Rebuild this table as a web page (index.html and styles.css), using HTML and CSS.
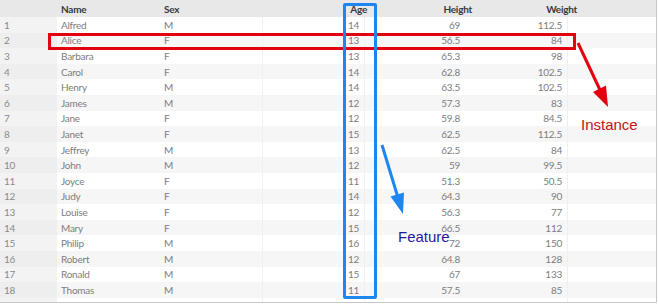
FILE: index.html
```html
<!DOCTYPE html>
<html>
<head>
<meta charset="utf-8">
<link rel="stylesheet" href="styles.css">
</head>
<body>
<div class="viewer">
  <div class="grid head">
    <div class="hd rn"></div>
    <div class="hd txt">Name</div>
    <div class="hd txt">Sex</div>
    <div class="hd num"><span class="h-age">Age</span></div>
    <div class="hd num"><span class="h-height">Height</span></div>
    <div class="hd num"><span class="h-weight">Weight</span></div>
    <div class="hd fill"></div>
  </div>
  <div class="grid body" id="body"></div>

  <div class="box-red"></div>
  <div class="box-blue"></div>
  <svg class="arrows" width="658" height="306" viewBox="0 0 658 306">
    <line x1="578" y1="43" x2="600" y2="90" stroke="#e3000f" stroke-width="3"/>
    <polygon points="608,107 606,85.5 593,92" fill="#e3000f"/>
    <line x1="382" y1="145" x2="397.5" y2="196" stroke="#1e86f0" stroke-width="3"/>
    <polygon points="403,214 404,192.5 390.5,196.5" fill="#1e86f0"/>
  </svg>
  <div class="label instance">Instance</div>
  <div class="label feature">Feature</div>
</div>
<script>
var data = [
["Alfred","M","14","69","112.5"],
["Alice","F","13","56.5","84"],
["Barbara","F","13","65.3","98"],
["Carol","F","14","62.8","102.5"],
["Henry","M","14","63.5","102.5"],
["James","M","12","57.3","83"],
["Jane","F","12","59.8","84.5"],
["Janet","F","15","62.5","112.5"],
["Jeffrey","M","13","62.5","84"],
["John","M","12","59","99.5"],
["Joyce","F","11","51.3","50.5"],
["Judy","F","14","64.3","90"],
["Louise","F","12","56.3","77"],
["Mary","F","15","66.5","112"],
["Philip","M","16","72","150"],
["Robert","M","12","64.8","128"],
["Ronald","M","15","67","133"],
["Thomas","M","11","57.5","85"],
["William","M","15","66.5","112"]
];
var body = document.getElementById("body");
var html = "";
data.forEach(function(r, i){
  var cls = i % 2 ? "alt" : "";
  html += '<div class="c rn ' + cls + '">' + (i+1) + '</div>' +
          '<div class="c txt ' + cls + '">' + r[0] + '</div>' +
          '<div class="c txt ' + cls + '">' + r[1] + '</div>' +
          '<div class="c num ' + cls + '">' + r[2] + '</div>' +
          '<div class="c num ' + cls + '">' + r[3] + '</div>' +
          '<div class="c num ' + cls + '">' + r[4] + '</div>' +
          '<div class="c fill ' + cls + '"></div>';
});
body.innerHTML = html;
</script>
</body>
</html>
```

FILE: styles.css
```css
html, body {
  margin: 0;
  padding: 0;
  background: #ffffff;
}
.viewer {
  position: relative;
  width: 657px;
  height: 303px;
  overflow: hidden;
  border-right: 1px solid #c8c8c8;
  border-bottom: 1px solid #c8c8c8;
  box-sizing: border-box;
  font-family: Lato, "Open Sans", sans-serif;
  font-size: 10px;
  letter-spacing: -0.25px;
  color: #7d7d7d;
}
.grid {
  display: grid;
  grid-template-columns: 57px 103px 103px 102px 101px 102px 1fr;
}
.grid.head {
  background: #e8e8e8;
}
.grid.body {
  grid-auto-rows: 15.6px;
}
.hd {
  height: 17px;
  color: #383838;
  font-weight: bold;
  display: flex;
  align-items: center;
  white-space: nowrap;
}
.hd.txt { padding-left: 4px; }
.hd.num { justify-content: flex-end; }
.h-age { margin-right: -2px; }
.h-height { margin-right: -6px; }
.h-weight { margin-right: -9px; }
.c {
  display: flex;
  align-items: center;
  white-space: nowrap;
  background: #ffffff;
  border-right: 1px solid #f0f0f0;
}
.c.alt { background: #f6f6f6; }
.c.rn {
  background: #f3f3f3;
  padding-left: 4px;
  color: #8a8a8a;
  border-right: none;
}
.c.rn.alt { background: #eeeeee; }
.c.txt { padding-left: 4px; }
.c.txt:nth-child(7n+2) { border-right-color: transparent; }
.c.num { justify-content: flex-end; padding-right: 5px; }
.c.num:nth-child(7n+5) { border-right-color: transparent; }
.c.fill { border-right: none; }
.box-red {
  position: absolute;
  left: 48px;
  top: 33px;
  width: 528px;
  height: 17px;
  border: 3px solid #e3000f;
  box-sizing: border-box;
}
.box-blue {
  position: absolute;
  left: 343px;
  top: 3px;
  width: 34px;
  height: 296px;
  border: 3px solid #1e86f0;
  border-radius: 2px;
  box-sizing: border-box;
}
.arrows {
  position: absolute;
  left: 0;
  top: 0;
}
.label {
  position: absolute;
  font-family: "Liberation Sans", Arial, sans-serif;
  font-size: 15px;
  line-height: 17px;
  letter-spacing: 0;
  white-space: nowrap;
}
.instance {
  left: 581px;
  top: 116px;
  color: #c4111b;
}
.feature {
  left: 398px;
  top: 228px;
  color: #1c1ca0;
}
```
